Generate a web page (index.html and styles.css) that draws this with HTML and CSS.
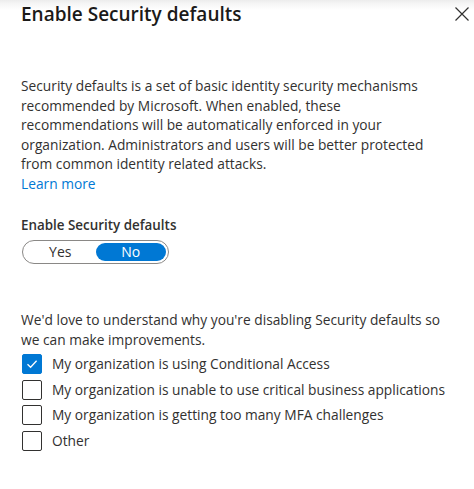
FILE: index.html
```html
<!DOCTYPE html>
<html lang="en">
<head>
<meta charset="utf-8">
<link rel="stylesheet" href="styles.css">
</head>
<body>
<div class="panel">
  <div class="header">
    <h1 class="title">Enable Security defaults</h1>
    <button class="close" aria-label="Close">
      <svg width="16" height="16" viewBox="0 0 16 16"><path d="M1.5 1.5 L14.5 14.5 M14.5 1.5 L1.5 14.5" stroke="#323130" stroke-width="1.2" fill="none"/></svg>
    </button>
  </div>
  <p class="desc">Security defaults is a set of basic identity security mechanisms recommended by Microsoft. When enabled, these recommendations will be automatically enforced in your organization. Administrators and users will be better protected from common identity related attacks.<br><a class="link" href="#">Learn more</a></p>
  <div class="field-label">Enable Security defaults</div>
  <div class="toggle">
    <span class="opt">Yes</span>
    <span class="opt active">No</span>
  </div>
  <p class="ask">We'd love to understand why you're disabling Security defaults so we can make improvements.</p>
  <div class="checks">
    <label class="check"><span class="box checked"><svg width="14" height="14" viewBox="0 0 14 14"><path d="M2.5 7.2 L5.6 10.2 L11.6 3.8" stroke="#fff" stroke-width="1.3" fill="none"/></svg></span>My organization is using Conditional Access</label>
    <label class="check"><span class="box"></span>My organization is unable to use critical business applications</label>
    <label class="check"><span class="box"></span>My organization is getting too many MFA challenges</label>
    <label class="check"><span class="box"></span>Other</label>
  </div>
</div>
</body>
</html>
```
FILE: styles.css
```css
html, body {
  margin: 0;
  padding: 0;
  background: #fff;
}
body {
  width: 474px;
  height: 489px;
  overflow: hidden;
  font-family: "Open Sans", "Noto Sans", sans-serif;
  color: #323130;
}
.panel {
  padding: 0 0 0 21px;
  background: linear-gradient(to bottom, #ececec 0px, #f6f6f6 4px, #ffffff 10px);
  min-height: 489px;
}
.header {
  display: flex;
  align-items: flex-start;
  justify-content: space-between;
  height: 30px;
}
.title {
  margin: 0;
  padding-top: 1px;
  font-size: 19px;
  font-weight: 600;
  line-height: 26px;
  color: #1b1a19;
}
.close {
  border: 0;
  background: none;
  padding: 0;
  margin: 6px 4px 0 0;
  width: 16px;
  height: 16px;
  display: flex;
}
.desc {
  margin: 46px 0 0 0;
  font-size: 13.75px;
  line-height: 19.5px;
  padding-right: 30px;
}
.link {
  color: #0078d4;
  text-decoration: none;
}
.field-label {
  margin-top: 22px;
  font-size: 13.4px;
  font-weight: 600;
  line-height: 20px;
}
.toggle {
  margin-top: 5px;
  width: 141px;
  height: 22px;
  border: 1px solid #8a8886;
  border-radius: 12px;
  display: flex;
  align-items: center;
  padding: 0 2px;
  margin-left: 1px;
}
.opt {
  flex: 1;
  text-align: center;
  font-size: 14px;
  line-height: 18px;
  height: 18px;
}
.opt.active {
  background: #0078d4;
  color: #fff;
  border-radius: 9px;
}
.ask {
  margin: 46px 0 0 0;
  font-size: 13.75px;
  line-height: 20px;
  padding-right: 20px;
}
.checks {
  display: flex;
  flex-direction: column;
  gap: 5.5px;
  margin-top: 4px;
}
.check {
  display: flex;
  align-items: center;
  gap: 10px;
  font-size: 13.75px;
  line-height: 20px;
  padding-left: 1px;
}
.box {
  width: 18px;
  height: 18px;
  border: 1px solid #323130;
  border-radius: 2px;
  display: flex;
  align-items: center;
  justify-content: center;
  flex: none;
}
.box.checked {
  background: #0078d4;
  border-color: #0078d4;
}
```
